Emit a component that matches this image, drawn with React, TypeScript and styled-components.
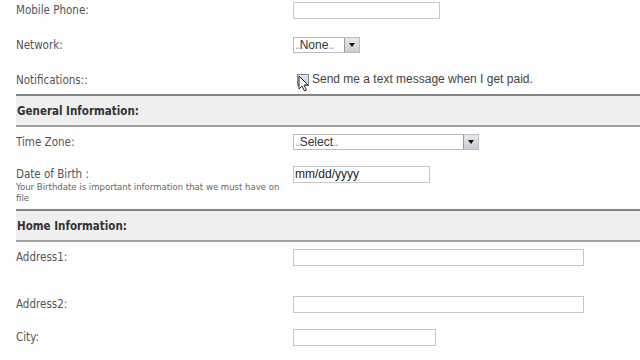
import React from 'react';
import styled, { createGlobalStyle } from 'styled-components';

const GlobalStyle = createGlobalStyle`
  html, body {
    margin: 0;
    padding: 0;
    background: #ffffff;
    overflow: hidden;
  }
  body {
    font-family: "DejaVu Sans Condensed", "DejaVu Sans", Verdana, sans-serif;
  }
`;

const Page = styled.div`
  width: 640px;
  height: 360px;
  overflow: hidden;
  background: #fefefe;
`;

const Form = styled.div`
  padding-left: 16px;
`;

const Row = styled.div<{ $h: number; $pad: number }>`
  display: grid;
  grid-template-columns: 277px 1fr;
  align-items: start;
  height: ${(p) => p.$h}px;
  padding-top: ${(p) => p.$pad}px;
  box-sizing: border-box;
`;

const Label = styled.div`
  font-size: 11.5px;
  line-height: 16px;
  color: #555;
`;

const Hint = styled.div`
  font-size: 9.5px;
  line-height: 11px;
  color: #666;
  margin-top: -1px;
`;

const TextBox = styled.div<{ $w: number }>`
  width: ${(p) => p.$w}px;
  height: 17px;
  box-sizing: border-box;
  border: 1px solid #c6c6c6;
  background: #fff;
  font-family: "Liberation Sans", Arial, sans-serif;
  font-size: 12px;
  line-height: 15px;
  color: #222;
  padding-left: 1px;
`;

const Select = styled.div<{ $w: number }>`
  width: ${(p) => p.$w}px;
  height: 16px;
  box-sizing: border-box;
  border: 1px solid #bdbdbd;
  background: #fff;
  display: flex;
  align-items: stretch;
`;

const SelectText = styled.div`
  flex: 1;
  font-family: "Liberation Sans", Arial, sans-serif;
  font-size: 12px;
  line-height: 14px;
  color: #333;
  padding-left: 1px;
  white-space: nowrap;
`;

const Dots = styled.span`
  color: #999;
  letter-spacing: -1px;
`;

const SelectButton = styled.div`
  width: 14px;
  border-left: 1px solid #9a9a9a;
  background: linear-gradient(#e6e8ec, #c9ccd2);
  display: flex;
  align-items: center;
  justify-content: center;
`;

const Arrow = styled.div`
  width: 0;
  height: 0;
  border-left: 3px solid transparent;
  border-right: 3px solid transparent;
  border-top: 4px solid #111;
`;

const CheckWrap = styled.div`
  display: flex;
  align-items: center;
  gap: 3px;
  padding-left: 4px;
  position: relative;
`;

const CheckBox = styled.div`
  width: 10px;
  height: 10px;
  border: 1px solid #7a8aa0;
  background: linear-gradient(#dfe6ee, #c3ccd8);
`;

const CheckText = styled.div`
  font-family: "Liberation Sans", Arial, sans-serif;
  font-size: 12px;
  line-height: 15px;
  color: #444;
`;

const Cursor = styled.svg`
  position: absolute;
  left: 5px;
  top: 3px;
`;

const Section = styled.div`
  height: 33px;
  box-sizing: border-box;
  border-top: 2px solid #858585;
  border-bottom: 2px solid #a0a0a0;
  background: #efefef;
  display: flex;
  align-items: center;
  padding-left: 1px;
`;

const SectionTitle = styled.div`
  font-size: 11.5px;
  font-weight: bold;
  color: #333;
`;

const Caret = () => (
  <SelectButton>
    <Arrow />
  </SelectButton>
);

const App: React.FC = () => {
  return (
    <Page>
      <GlobalStyle />
      <Form>
        <Row $h={27} $pad={2}>
          <Label>Mobile Phone:</Label>
          <TextBox $w={147} />
        </Row>
        <Row $h={34} $pad={10}>
          <Label>Network:</Label>
          <Select $w={67}>
            <SelectText>
              <Dots>..</Dots>None<Dots>..</Dots>
            </SelectText>
            <Caret />
          </Select>
        </Row>
        <Row $h={33} $pad={11}>
          <Label>Notifications::</Label>
          <CheckWrap>
            <CheckBox />
            <CheckText>Send me a text message when I get paid.</CheckText>
            <Cursor width="12" height="17" viewBox="0 0 12 17">
              <path d="M1 1 L1 14 L4 11 L6.5 16 L8.5 15 L6 10 L10 10 Z" fill="#fff" stroke="#222" strokeWidth="1" />
            </Cursor>
          </CheckWrap>
        </Row>

        <Section>
          <SectionTitle>General Information:</SectionTitle>
        </Section>
        <Row $h={31} $pad={7}>
          <Label>Time Zone:</Label>
          <Select $w={186}>
            <SelectText>
              <Dots>..</Dots>Select<Dots>..</Dots>
            </SelectText>
            <Caret />
          </Select>
        </Row>
        <Row $h={51} $pad={8}>
          <div>
            <Label>Date of Birth :</Label>
            <Hint>Your Birthdate is important information that we must have on file</Hint>
          </div>
          <TextBox $w={137}>mm/dd/yyyy</TextBox>
        </Row>

        <Section>
          <SectionTitle>Home Information:</SectionTitle>
        </Section>
        <Row $h={46} $pad={7}>
          <Label>Address1:</Label>
          <TextBox $w={291} />
        </Row>
        <Row $h={33} $pad={8}>
          <Label>Address2:</Label>
          <TextBox $w={291} />
        </Row>
        <Row $h={40} $pad={8}>
          <Label>City:</Label>
          <TextBox $w={143} />
        </Row>
      </Form>
    </Page>
  );
};

export default App;
